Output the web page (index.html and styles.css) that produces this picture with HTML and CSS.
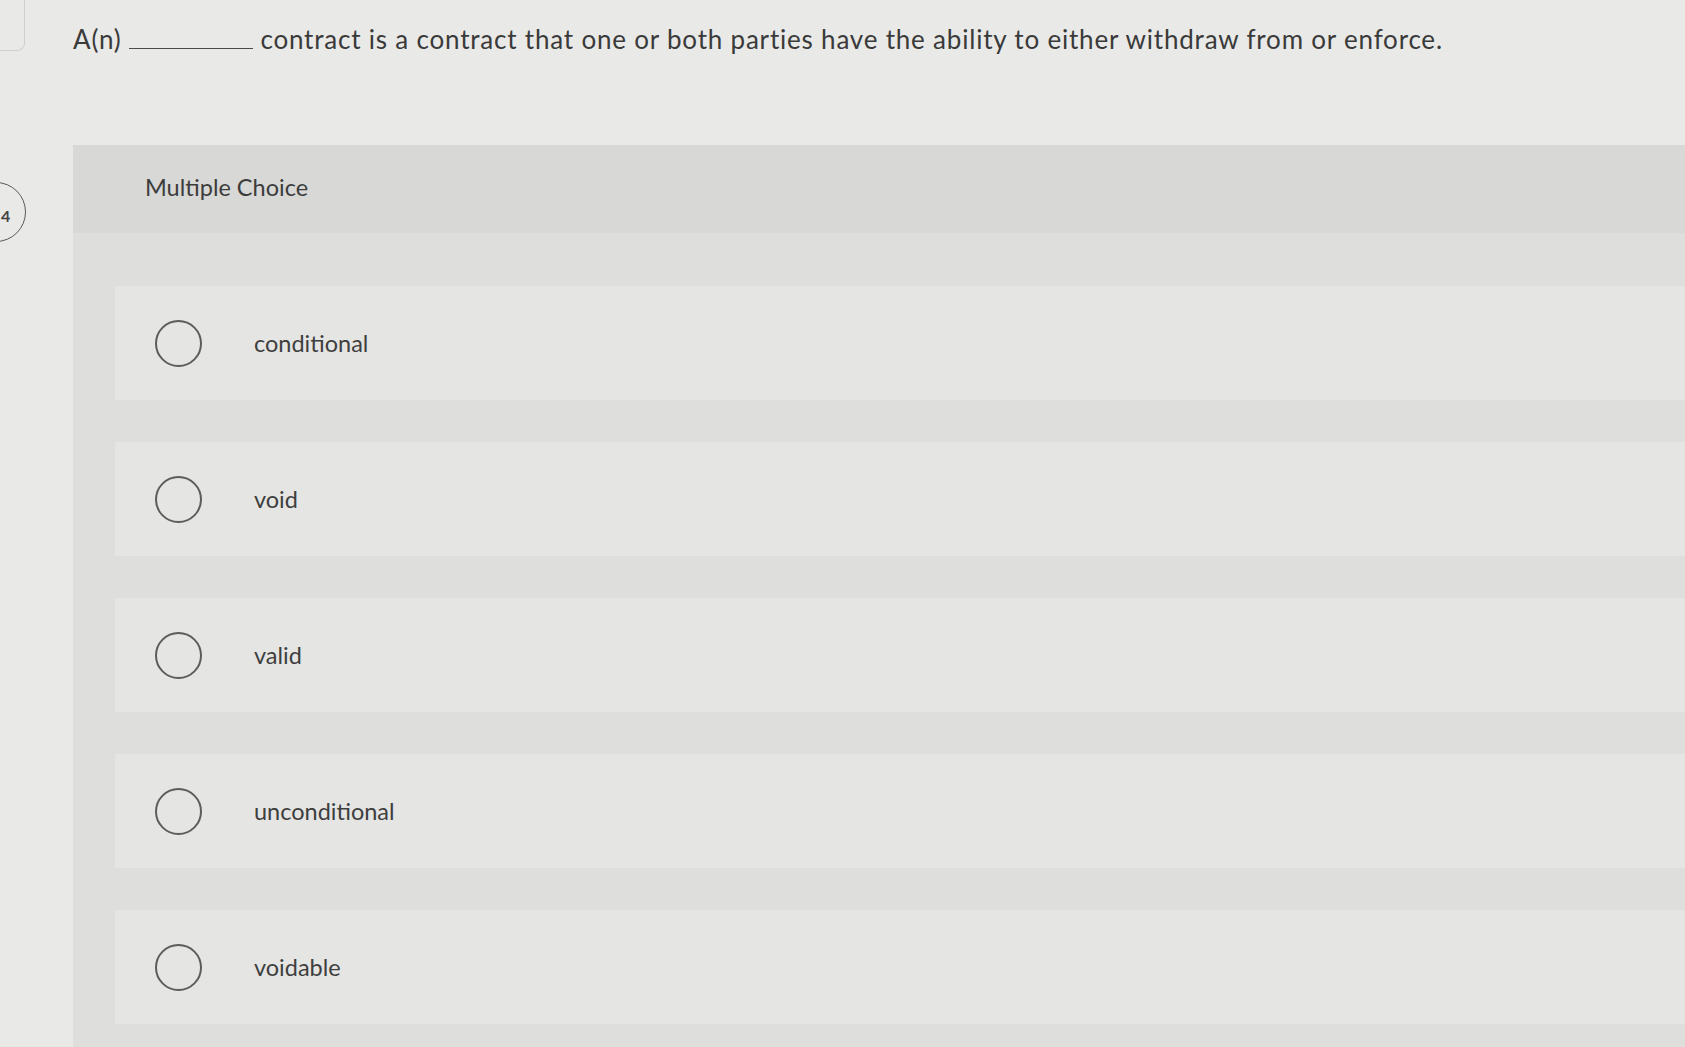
FILE: index.html
```html
<!DOCTYPE html>
<html lang="en">
<head>
<meta charset="utf-8">
<title>Multiple Choice</title>
<link rel="stylesheet" href="styles.css">
</head>
<body>
<div class="page">
  <aside class="rail">
    <div class="rail-tab"></div>
    <div class="rail-badge"><span class="rail-num">4</span></div>
  </aside>
  <main class="main">
    <p class="question">A(n) <span class="blank"></span> contract is a contract that one or both parties have the ability to either withdraw from or enforce.</p>
    <section class="panel">
      <div class="panel-head">Multiple Choice</div>
      <ul class="options">
        <li class="option"><span class="radio"></span><span class="label">conditional</span></li>
        <li class="option"><span class="radio"></span><span class="label">void</span></li>
        <li class="option"><span class="radio"></span><span class="label">valid</span></li>
        <li class="option"><span class="radio"></span><span class="label">unconditional</span></li>
        <li class="option"><span class="radio"></span><span class="label">voidable</span></li>
      </ul>
    </section>
  </main>
</div>
</body>
</html>
```

FILE: styles.css
```css
html, body {
  margin: 0;
  padding: 0;
  height: 100%;
  overflow: hidden;
}
body {
  background: #e9e9e7;
  font-family: Lato, "Open Sans", "Liberation Sans", sans-serif;
  color: #3c3c3c;
}
.page {
  display: flex;
  min-height: 100%;
}
.rail {
  width: 73px;
  flex: none;
}
.rail-tab {
  width: 25px;
  height: 51px;
  border-right: 1px solid #cfcfcd;
  border-bottom: 1px solid #cfcfcd;
  border-bottom-right-radius: 8px;
  box-sizing: border-box;
}
.rail-badge {
  width: 60px;
  height: 60px;
  margin-top: 131px;
  margin-left: -34px;
  border: 1.5px solid #5a5a5a;
  border-radius: 50%;
  box-sizing: border-box;
  display: flex;
  align-items: center;
}
.rail-num {
  padding-left: 34px;
  padding-top: 6px;
  font-size: 16px;
  font-weight: 700;
  color: #444;
}
.main {
  flex: 1;
  min-width: 0;
}
.question {
  margin: 23px 0 0 0;
  font-size: 26px;
  line-height: 32px;
  letter-spacing: 0.8px;
  color: #3a3a3a;
  white-space: nowrap;
}
.blank {
  display: inline-block;
  width: 124px;
  height: 20px;
  border-bottom: 1.5px solid #4a4a4a;
  margin: 0;
  vertical-align: baseline;
}
.panel {
  margin-top: 90px;
  background: #dededc;
  min-height: 960px;
}
.panel-head {
  height: 88px;
  box-sizing: border-box;
  padding: 28px 0 0 72px;
  background: #d8d8d6;
  font-size: 23.5px;
  line-height: 28px;
  color: #3c3c3c;
}
.options {
  list-style: none;
  margin: 0;
  padding: 53px 0 0 42px;
  display: flex;
  flex-direction: column;
  gap: 42px;
}
.option {
  height: 114px;
  background: #e5e5e3;
  display: flex;
  align-items: center;
}
.radio {
  width: 47px;
  height: 47px;
  margin-left: 40px;
  border: 2px solid #5c5c5c;
  border-radius: 50%;
  box-sizing: border-box;
  flex: none;
}
.label {
  margin-left: 52px;
  font-size: 23.5px;
  color: #3e3e3e;
}
```
